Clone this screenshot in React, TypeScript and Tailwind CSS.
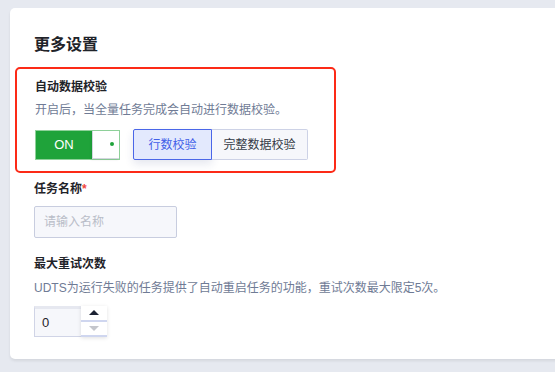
const font = { fontFamily: '"Liberation Sans", "Noto Sans CJK SC", sans-serif' };

function Toggle() {
  return (
    <div className="flex h-[30px] w-[85px] border border-[#8fd19a] bg-white">
      <div className="flex w-[56px] items-center justify-center bg-[#1fa33a] text-[13px] font-medium text-white">
        ON
      </div>
      <div className="flex flex-1 items-center justify-end border-b border-l border-[#d3d6de] pr-[5px] shadow-[-1px_1px_2px_rgba(0,0,0,0.08)]">
        <span className="h-[4px] w-[4px] rounded-full bg-[#1fa33a]" />
      </div>
    </div>
  );
}

function Segments() {
  return (
    <div className="flex h-[31px] text-[12px]">
      <button className="w-[79px] rounded-l-[2px] border border-[#4a66e8] bg-[#e3e9fd] text-[#3f5ee8] shadow-[0_4px_8px_rgba(40,60,120,0.12)]">
        行数校验
      </button>
      <button className="w-[96px] rounded-r-[2px] border border-l-0 border-[#cdd2e6] bg-[#f6f7fb] text-[#333a46]">
        完整数据校验
      </button>
    </div>
  );
}

function NumberInput() {
  return (
    <div className="flex h-[31px] w-[73px]">
      <div className="flex flex-1 items-center border border-r-0 border-t-[3px] border-[#d0d4e6] border-t-[#e6e8f0] bg-[#f6f7fb] pl-[7px] text-[13px] text-[#1f2329]">
        0
      </div>
      <div className="flex w-[26px] flex-col bg-white shadow-[0_1px_4px_rgba(0,0,0,0.12)]">
        <div className="flex flex-1 items-center justify-center border-b-2 border-[#cfd6ef]">
          <svg width="10" height="5" viewBox="0 0 10 5">
            <path d="M0 5 L5 0 L10 5 Z" fill="#1c2233" />
          </svg>
        </div>
        <div className="flex flex-1 items-center justify-center border-b-2 border-[#cfd6ef]">
          <svg width="10" height="5" viewBox="0 0 10 5">
            <path d="M0 0 L5 5 L10 0 Z" fill="#c4c6cc" />
          </svg>
        </div>
      </div>
    </div>
  );
}

export default function App() {
  return (
    <div className="min-h-[372px] overflow-hidden bg-[#e6e9f0] pl-[10px] pt-[8px]" style={font}>
      <div className="w-[600px] rounded-[5px] bg-white px-[5px] pb-[22px] pt-[25px] shadow-[0_2px_3px_rgba(0,0,0,0.08)]">
        <h2 className="pl-[19px] text-[16px] leading-[24px] font-semibold text-[#1f2329]">更多设置</h2>

        <div className="mt-[10px] w-[321px] rounded-[5px] border-2 border-[#fc2a17] pb-[11px] pl-[18px] pt-[9px]">
          <div className="text-[12px] leading-[18px] font-semibold text-[#1f2329]">自动数据校验</div>
          <div className="mt-[5px] text-[12px] leading-[18px] text-[#6f7b95]">
            开启后，当全量任务完成会自动进行数据校验。
          </div>
          <div className="mt-[10px] flex items-center gap-[13px]">
            <Toggle />
            <Segments />
          </div>
        </div>

        <div className="pl-[19px]">
          <div className="mt-[7px] text-[12px] leading-[18px] font-semibold text-[#1f2329]">
            任务名称<span className="text-[#f0463c]">*</span>
          </div>
          <div className="mt-[8px] flex h-[32px] w-[143px] items-center rounded-[2px] border border-[#c8cddf] bg-[#f6f7fb] pl-[9px] text-[12px] text-[#b9bdc8]">
            请输入名称
          </div>

          <div className="mt-[17px] text-[12px] leading-[18px] font-semibold text-[#1f2329]">最大重试次数</div>
          <div className="mt-[6px] text-[12px] leading-[18px] text-[#6f7b95]">
            UDTS为运行失败的任务提供了自动重启任务的功能，重试次数最大限定5次。
          </div>
          <div className="mt-[9px]">
            <NumberInput />
          </div>
        </div>
      </div>
    </div>
  );
}
